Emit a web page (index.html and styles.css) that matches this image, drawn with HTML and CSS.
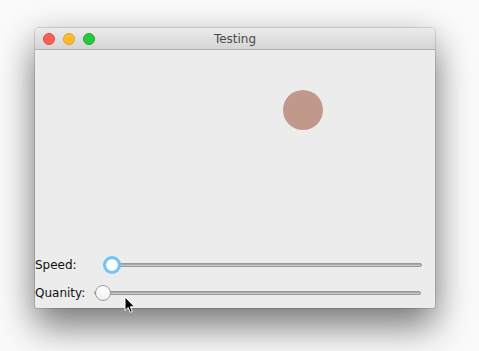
FILE: index.html
```html
<!DOCTYPE html>
<html>
<head>
<meta charset="utf-8">
<link rel="stylesheet" href="styles.css">
</head>
<body>
<div class="window">
  <div class="titlebar">
    <div class="lights">
      <span class="light red"></span>
      <span class="light yellow"></span>
      <span class="light green"></span>
    </div>
    <div class="title">Testing</div>
  </div>
  <div class="content">
    <div class="canvas">
      <div class="ball"></div>
    </div>
    <div class="row">
      <div class="label speed-label">Speed:</div>
      <div class="slider">
        <div class="track"></div>
        <div class="thumb focused"></div>
      </div>
    </div>
    <div class="row">
      <div class="label quan-label">Quanity:</div>
      <div class="slider">
        <div class="track"></div>
        <div class="thumb"></div>
      </div>
    </div>
  </div>
  <svg class="cursor" width="12" height="18" viewBox="0 0 12 18">
    <path d="M1 1 L1 14.5 L4.2 11.5 L6.3 16.3 L8.3 15.4 L6.3 10.8 L10.5 10.8 Z" fill="#000" stroke="#fff" stroke-width="1" stroke-linejoin="round"/>
  </svg>
</div>
</body>
</html>
```
FILE: styles.css
```css
html, body {
  margin: 0;
  padding: 0;
  background: #fafafa;
  width: 479px;
  height: 351px;
  overflow: hidden;
}
body {
  padding-top: 28px;
  padding-left: 35px;
  box-sizing: border-box;
}
.window {
  position: relative;
  width: 400px;
  height: 280px;
  display: flex;
  flex-direction: column;
  background: #ececec;
  border-radius: 4px 4px 2px 2px;
  box-shadow: 0 0 0 1px rgba(0,0,0,0.12), 0 20px 36px rgba(0,0,0,0.45), 0 4px 34px rgba(0,0,0,0.14);
  font-family: "DejaVu Sans", sans-serif;
}
.titlebar {
  position: relative;
  height: 21px;
  flex: none;
  background: linear-gradient(#ebebeb, #d5d5d5);
  border-bottom: 1px solid #b1b1b1;
  border-radius: 4px 4px 0 0;
  display: flex;
  align-items: center;
  justify-content: center;
}
.lights {
  position: absolute;
  left: 8px;
  top: 5px;
  display: flex;
  gap: 8px;
}
.light {
  width: 12px;
  height: 12px;
  border-radius: 50%;
  box-sizing: border-box;
}
.red { background: #fc5f57; border: 1px solid #e2463f; }
.yellow { background: #fdbc2e; border: 1px solid #e1a116; }
.green { background: #28c83f; border: 1px solid #14ae2a; }
.title {
  font-size: 12px;
  color: #4a4a4a;
  margin-top: 1px;
}
.content {
  flex: 1;
  display: flex;
  flex-direction: column;
}
.canvas {
  flex: 1;
  position: relative;
}
.ball {
  position: absolute;
  left: 248px;
  top: 40px;
  width: 40px;
  height: 40px;
  border-radius: 50%;
  background: #c1998b;
}
.row {
  height: 28px;
  display: flex;
  align-items: center;
}
.row:last-child {
  margin-bottom: 1px;
}
.label {
  font-size: 12px;
  color: #111;
  flex: none;
}
.speed-label { width: 68px; }
.quan-label { width: 59px; }
.slider {
  position: relative;
  height: 18px;
  width: 319px;
  flex: none;
}
.row:last-child .slider { width: 327px; }
.track {
  position: absolute;
  left: 0;
  right: 0;
  top: 7px;
  height: 4px;
  border-radius: 2px;
  background: #c8c8c8;
  border: 1px solid #9a9a9a;
  box-sizing: border-box;
  box-shadow: inset 0 1px 0 #a9a9a9;
}
.thumb {
  position: absolute;
  top: 1px;
  left: 1px;
  width: 16px;
  height: 16px;
  border-radius: 50%;
  box-sizing: border-box;
  background: linear-gradient(#ffffff, #f0f0f0);
  border: 1px solid #9c9c9c;
}
.thumb.focused {
  left: 0;
  top: 0;
  width: 18px;
  height: 18px;
  border: 3px solid #6ec4f3;
  background: #fdfdfd;
}
.cursor {
  position: absolute;
  left: 89px;
  top: 268px;
}
```
